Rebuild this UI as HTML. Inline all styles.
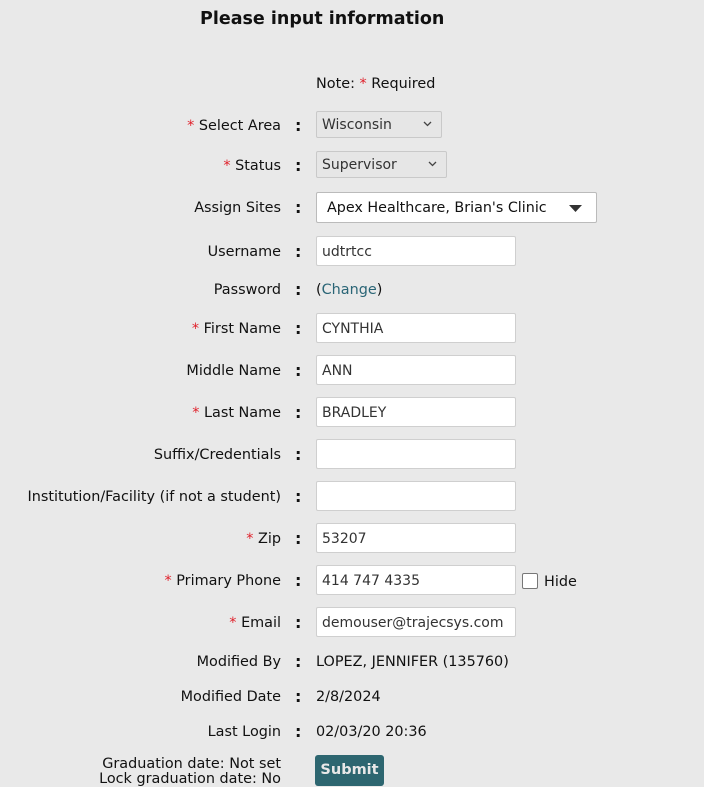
<!DOCTYPE html>
<html><head><meta charset="utf-8"><style>
html,body{margin:0;padding:0;background:#e9e9e9;width:704px;height:785px;overflow:hidden;font-family:"DejaVu Sans",Verdana,sans-serif;font-size:14.4px;color:#111;}
.a{position:absolute;white-space:nowrap;}
.l{position:absolute;right:423px;white-space:nowrap;line-height:16px;}
.c{position:absolute;left:295px;font-weight:bold;font-size:16px;line-height:16px;}
.r{color:#e0202a;}
.in{position:absolute;left:316px;width:198px;height:28px;background:#fff;border:1px solid #cfcfcf;border-radius:2px;box-sizing:content-box;}
.in span{position:absolute;left:5px;top:7px;color:#333;font-size:14px;}
.sel{position:absolute;left:316px;background:#e6e6e6;border:1px solid #c9c9c9;border-radius:2px;}
.sel span{position:absolute;left:5px;top:5px;color:#333;font-size:14px;}
.v{position:absolute;left:316px;white-space:nowrap;line-height:16px;}
</style></head><body>
<div class="a" style="left:200px;top:9px;font-weight:bold;font-size:17.5px;">Please input information</div>
<div class="a" style="left:316px;top:76px;">Note: <span class="r">*</span> Required</div>

<div class="l" style="top:118px"><span class="r">*</span> Select Area</div><div class="c" style="top:118px">:</div>
<div class="sel" style="top:111px;width:124px;height:25px"><span>Wisconsin</span><svg style="position:absolute;right:9px;top:9px" width="9" height="6"><path d="M1 1l3.5 3.5L8 1" stroke="#444" fill="none" stroke-width="1.3"/></svg></div>

<div class="l" style="top:158px"><span class="r">*</span> Status</div><div class="c" style="top:158px">:</div>
<div class="sel" style="top:151px;width:129px;height:25px"><span>Supervisor</span><svg style="position:absolute;right:9px;top:9px" width="9" height="6"><path d="M1 1l3.5 3.5L8 1" stroke="#444" fill="none" stroke-width="1.3"/></svg></div>

<div class="l" style="top:200px">Assign Sites</div><div class="c" style="top:200px">:</div>
<div style="position:absolute;left:316px;top:192px;width:279px;height:29px;background:#fff;border:1px solid #bbb;border-radius:2px;"><span style="position:absolute;left:10px;top:7px;font-size:14.3px;color:#111">Apex Healthcare, Brian's Clinic</span><svg style="position:absolute;right:14px;top:12px" width="13" height="7"><path d="M0 0h13L6.5 7z" fill="#333"/></svg></div>

<div class="l" style="top:244px">Username</div><div class="c" style="top:244px">:</div>
<div class="in" style="top:236px"><span>udtrtcc</span></div>

<div class="l" style="top:282px">Password</div><div class="c" style="top:282px">:</div>
<div class="v" style="top:282px">(<span style="color:#2a6576">Change</span>)</div>

<div class="l" style="top:321px"><span class="r">*</span> First Name</div><div class="c" style="top:321px">:</div>
<div class="in" style="top:313px"><span>CYNTHIA</span></div>

<div class="l" style="top:363px">Middle Name</div><div class="c" style="top:363px">:</div>
<div class="in" style="top:355px"><span>ANN</span></div>

<div class="l" style="top:405px"><span class="r">*</span> Last Name</div><div class="c" style="top:405px">:</div>
<div class="in" style="top:397px"><span>BRADLEY</span></div>

<div class="l" style="top:447px">Suffix/Credentials</div><div class="c" style="top:447px">:</div>
<div class="in" style="top:439px"></div>

<div class="l" style="top:489px">Institution/Facility (if not a student)</div><div class="c" style="top:489px">:</div>
<div class="in" style="top:481px"></div>

<div class="l" style="top:531px"><span class="r">*</span> Zip</div><div class="c" style="top:531px">:</div>
<div class="in" style="top:523px"><span>53207</span></div>

<div class="l" style="top:573px"><span class="r">*</span> Primary Phone</div><div class="c" style="top:573px">:</div>
<div class="in" style="top:565px"><span>414 747 4335</span></div>
<div style="position:absolute;left:522px;top:573px;width:14px;height:14px;border:1px solid #777;border-radius:2px;background:#fff"></div>
<div class="a" style="left:544px;top:574px">Hide</div>

<div class="l" style="top:615px"><span class="r">*</span> Email</div><div class="c" style="top:615px">:</div>
<div class="in" style="top:607px"><span>demouser@trajecsys.com</span></div>

<div class="l" style="top:654px">Modified By</div><div class="c" style="top:654px">:</div>
<div class="v" style="top:654px">LOPEZ, JENNIFER (135760)</div>

<div class="l" style="top:689px">Modified Date</div><div class="c" style="top:689px">:</div>
<div class="v" style="top:689px">2/8/2024</div>

<div class="l" style="top:724px">Last Login</div><div class="c" style="top:724px">:</div>
<div class="v" style="top:724px">02/03/20 20:36</div>

<div class="l" style="top:757px;line-height:15px;text-align:right">Graduation date: Not set<br>Lock graduation date: No</div>
<div style="position:absolute;left:315px;top:755px;width:69px;height:31px;background:#2d6670;border-radius:3px;color:#e8e8e8;font-weight:bold;font-size:14.5px;text-align:center;line-height:30px;">Submit</div>
</body></html>
